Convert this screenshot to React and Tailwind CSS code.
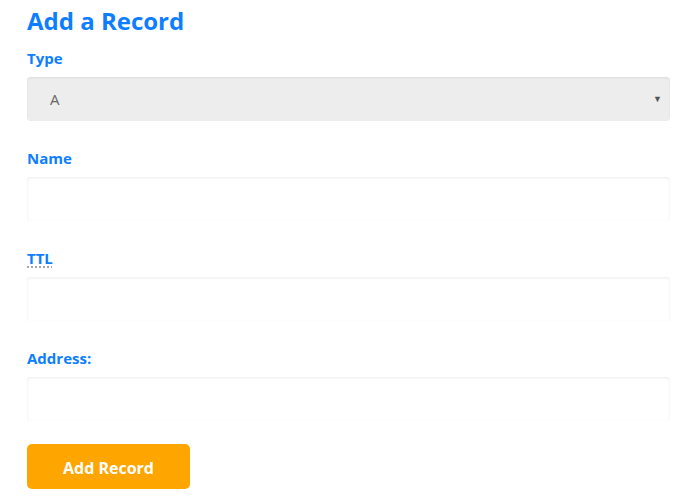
export default function App() {
  const inputCls =
    'block w-full h-[44px] rounded-[3px] bg-white shadow-[inset_0_1px_3px_rgba(0,0,0,0.08)] outline-none';
  const labelCls = 'block text-[15px] font-bold leading-[20px] text-[#0d7eff]';

  return (
    <div
      className="w-full min-h-[502px] bg-white px-[27px] pt-[6px]"
      style={{ fontFamily: '"Open Sans", sans-serif' }}
    >
      <h2 className="text-[24px] font-bold leading-[29px] text-[#0d7eff]">Add a Record</h2>

      <label className={`${labelCls} mt-[13px]`}>Type</label>
      <div className="relative mt-[9px] h-[44px] rounded-[4px] bg-[#ededed] shadow-[inset_0_1px_2px_rgba(0,0,0,0.08)]">
        <span className="absolute left-[23px] top-[12px] text-[15px] leading-[20px] text-[#666]">A</span>
        <span className="absolute right-[8px] top-[14px] text-[9px] leading-[16px] text-[#555]">▼</span>
      </div>

      <label className={`${labelCls} mt-[27px]`}>Name</label>
      <div className={`${inputCls} mt-[9px]`} />

      <label className={`${labelCls} mt-[27px]`}>
        <abbr className="underline decoration-dotted decoration-[#888] underline-offset-[3px]" title="Time to live">
          TTL
        </abbr>
      </label>
      <div className={`${inputCls} mt-[9px]`} />

      <label className={`${labelCls} mt-[27px]`}>Address:</label>
      <div className={`${inputCls} mt-[9px]`} />

      <button className="mt-[23px] h-[45px] w-[163px] rounded-[5px] bg-[#ffa500] pt-[2px] text-[16px] font-bold text-white">
        Add Record
      </button>
    </div>
  );
}
